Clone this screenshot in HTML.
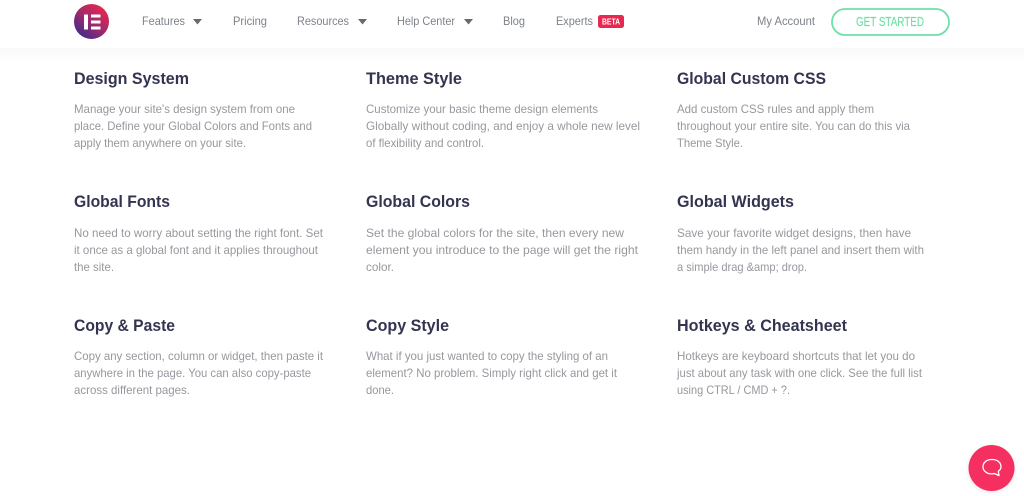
<!DOCTYPE html>
<html lang="en">
<head>
<meta charset="utf-8">
<title>Elementor Features</title>
<style>
html,body{margin:0;padding:0;background:#fff;width:1024px;height:496px;overflow:hidden}
svg{display:block;position:absolute;left:0;top:0}
text{font-family:"Liberation Sans",sans-serif}
.n{font-size:12px;fill:#7d828a}
.t{font-size:17px;font-weight:700;fill:#33344f}
.p{font-size:12px;fill:#97989e}
</style>
</head>
<body>
<svg width="1024" height="496" viewBox="0 0 1024 496" xmlns="http://www.w3.org/2000/svg">
<defs>
<linearGradient id="lg" x1="0.85" y1="0.1" x2="0.2" y2="0.9">
<stop offset="0" stop-color="#e8274f"/>
<stop offset="0.5" stop-color="#a22a6a"/>
<stop offset="1" stop-color="#4a2a8a"/>
</linearGradient>
<linearGradient id="sh" x1="0" y1="0" x2="0" y2="1">
<stop offset="0" stop-color="#f9f9f9"/>
<stop offset="1" stop-color="#ffffff"/>
</linearGradient>
<filter id="bs" x="-30%" y="-30%" width="160%" height="160%"><feGaussianBlur stdDeviation="2"/></filter>
</defs>

<rect x="0" y="48" width="1024" height="14" fill="url(#sh)"/>

<circle cx="91.5" cy="21.5" r="17.5" fill="url(#lg)"/>
<rect x="84" y="14.500" width="4" height="15" fill="#fff"/>
<rect x="91" y="14.500" width="9.500" height="3" fill="#fff"/>
<rect x="91" y="20.500" width="9.500" height="3" fill="#fff"/>
<rect x="91" y="26.500" width="9.500" height="3" fill="#fff"/>

<text class="n" x="142" y="25" textLength="43" lengthAdjust="spacingAndGlyphs">Features</text>
<path d="M193 19h9l-4.500 5.500z" fill="#666b73"/>
<text class="n" x="233" y="25" textLength="34" lengthAdjust="spacingAndGlyphs">Pricing</text>
<text class="n" x="297" y="25" textLength="52" lengthAdjust="spacingAndGlyphs">Resources</text>
<path d="M358 19h9l-4.500 5.500z" fill="#666b73"/>
<text class="n" x="397" y="25" textLength="58" lengthAdjust="spacingAndGlyphs">Help Center</text>
<path d="M464 19h9l-4.500 5.500z" fill="#666b73"/>
<text class="n" x="503" y="25" textLength="22" lengthAdjust="spacingAndGlyphs">Blog</text>
<text class="n" x="556" y="25" textLength="37" lengthAdjust="spacingAndGlyphs">Experts</text>
<rect x="598" y="15" width="26" height="13" rx="2.500" fill="#e6294f"/>
<text x="602" y="24.500" font-size="8" font-weight="700" fill="#fff" textLength="18" lengthAdjust="spacingAndGlyphs">BETA</text>
<text class="n" x="757" y="25" textLength="58" lengthAdjust="spacingAndGlyphs">My Account</text>
<rect x="832" y="9" width="117" height="26" rx="13" fill="#fff" stroke="#6fe0a6" stroke-width="1.800"/>
<text x="856" y="26" font-size="12.500" fill="#6fe0a6" stroke="#6fe0a6" stroke-width="0.150" textLength="68" lengthAdjust="spacingAndGlyphs">GET STARTED</text>

<text class="t" x="74" y="84" textLength="115" lengthAdjust="spacingAndGlyphs">Design System</text>
<text class="p" x="74" y="113" textLength="221" lengthAdjust="spacingAndGlyphs">Manage your site's design system from one</text>
<text class="p" x="74" y="130" textLength="238" lengthAdjust="spacingAndGlyphs">place. Define your Global Colors and Fonts and</text>
<text class="p" x="74" y="147" textLength="172" lengthAdjust="spacingAndGlyphs">apply them anywhere on your site.</text>

<text class="t" x="366" y="84" textLength="96" lengthAdjust="spacingAndGlyphs">Theme Style</text>
<text class="p" x="366" y="113" textLength="232" lengthAdjust="spacingAndGlyphs">Customize your basic theme design elements</text>
<text class="p" x="366" y="130" textLength="274" lengthAdjust="spacingAndGlyphs">Globally without coding, and enjoy a whole new level</text>
<text class="p" x="366" y="147" textLength="118" lengthAdjust="spacingAndGlyphs">of flexibility and control.</text>

<text class="t" x="677" y="84" textLength="149" lengthAdjust="spacingAndGlyphs">Global Custom CSS</text>
<text class="p" x="677" y="113" textLength="197" lengthAdjust="spacingAndGlyphs">Add custom CSS rules and apply them</text>
<text class="p" x="677" y="130" textLength="233" lengthAdjust="spacingAndGlyphs">throughout your entire site. You can do this via</text>
<text class="p" x="677" y="147" textLength="66" lengthAdjust="spacingAndGlyphs">Theme Style.</text>

<text class="t" x="74" y="207" textLength="96" lengthAdjust="spacingAndGlyphs">Global Fonts</text>
<text class="p" x="74" y="237" textLength="249" lengthAdjust="spacingAndGlyphs">No need to worry about setting the right font. Set</text>
<text class="p" x="74" y="254" textLength="244" lengthAdjust="spacingAndGlyphs">it once as a global font and it applies throughout</text>
<text class="p" x="74" y="271" textLength="40" lengthAdjust="spacingAndGlyphs">the site.</text>

<text class="t" x="366" y="207" textLength="104" lengthAdjust="spacingAndGlyphs">Global Colors</text>
<text class="p" x="366" y="237" textLength="258" lengthAdjust="spacingAndGlyphs">Set the global colors for the site, then every new</text>
<text class="p" x="366" y="254" textLength="272" lengthAdjust="spacingAndGlyphs">element you introduce to the page will get the right</text>
<text class="p" x="366" y="271" textLength="28" lengthAdjust="spacingAndGlyphs">color.</text>

<text class="t" x="677" y="207" textLength="117" lengthAdjust="spacingAndGlyphs">Global Widgets</text>
<text class="p" x="677" y="237" textLength="234" lengthAdjust="spacingAndGlyphs">Save your favorite widget designs, then have</text>
<text class="p" x="677" y="254" textLength="247" lengthAdjust="spacingAndGlyphs">them handy in the left panel and insert them with</text>
<text class="p" x="677" y="271" textLength="130" lengthAdjust="spacingAndGlyphs">a simple drag &amp;amp; drop.</text>

<text class="t" x="74" y="331" textLength="101" lengthAdjust="spacingAndGlyphs">Copy &amp; Paste</text>
<text class="p" x="74" y="360" textLength="249" lengthAdjust="spacingAndGlyphs">Copy any section, column or widget, then paste it</text>
<text class="p" x="74" y="377" textLength="237" lengthAdjust="spacingAndGlyphs">anywhere in the page. You can also copy-paste</text>
<text class="p" x="74" y="394" textLength="116" lengthAdjust="spacingAndGlyphs">across different pages.</text>

<text class="t" x="366" y="331" textLength="83" lengthAdjust="spacingAndGlyphs">Copy Style</text>
<text class="p" x="366" y="360" textLength="242" lengthAdjust="spacingAndGlyphs">What if you just wanted to copy the styling of an</text>
<text class="p" x="366" y="377" textLength="251" lengthAdjust="spacingAndGlyphs">element? No problem. Simply right click and get it</text>
<text class="p" x="366" y="394" textLength="28" lengthAdjust="spacingAndGlyphs">done.</text>

<text class="t" x="677" y="331" textLength="170" lengthAdjust="spacingAndGlyphs">Hotkeys &amp; Cheatsheet</text>
<text class="p" x="677" y="360" textLength="238" lengthAdjust="spacingAndGlyphs">Hotkeys are keyboard shortcuts that let you do</text>
<text class="p" x="677" y="377" textLength="245" lengthAdjust="spacingAndGlyphs">just about any task with one click. See the full list</text>
<text class="p" x="677" y="394" textLength="113" lengthAdjust="spacingAndGlyphs">using CTRL / CMD + ?.</text>

<circle cx="991.5" cy="469.500" r="23" fill="#000" opacity=".1" filter="url(#bs)"/>
<circle cx="991.5" cy="468" r="23" fill="#f52f5f"/>
<path d="M991.500 459.500c-5 0-8.500 3.200-8.500 7.200s3.500 7.200 8.500 7.200c1 0 2-.1 2.900-.4l4.600 2.100-.7-4.300c1.700-1.300 2.700-2.900 2.700-4.600 0-4-3.500-7.200-8.500-7.200z" fill="none" stroke="#fff" stroke-width="1.300" stroke-linejoin="round"/>
</svg>
</body>
</html>
